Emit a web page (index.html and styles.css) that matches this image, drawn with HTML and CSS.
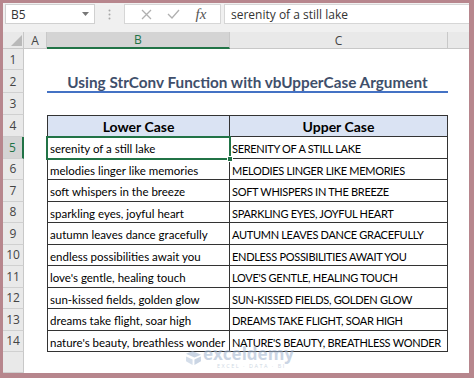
FILE: index.html
```html
<!DOCTYPE html>
<html>
<head>
<meta charset="utf-8">
<link rel="stylesheet" href="styles.css">
</head>
<body>
<div class="frame">
  <div class="fbar">
    <div class="namebox"><span class="nb-text">B5</span><svg class="caret" width="7" height="4" viewBox="0 0 7 4"><path d="M0 0h7L3.5 4z" fill="#777"/></svg></div>
    <div class="grip"><svg width="3" height="11" viewBox="0 0 3 11"><circle cx="1.5" cy="1.5" r="1" fill="#a8a8a8"/><circle cx="1.5" cy="5.5" r="1" fill="#a8a8a8"/><circle cx="1.5" cy="9.5" r="1" fill="#a8a8a8"/></svg></div>
    <div class="fbtns">
      <svg class="ico" width="11" height="11" viewBox="0 0 11 11"><path d="M1 1l9 9M10 1l-9 9" stroke="#b0b0b0" stroke-width="1.3" fill="none"/></svg>
      <svg class="ico" width="13" height="10" viewBox="0 0 13 10"><path d="M1 5l4 4 7-8" stroke="#b0b0b0" stroke-width="1.3" fill="none"/></svg>
      <span class="fx">fx</span>
    </div>
    <div class="finput">serenity of a still lake</div>
  </div>
  <div class="sheet">
    <div class="ch corner"><svg width="11" height="11" viewBox="0 0 11 11"><path d="M11 0v11H0z" fill="#b9b9b9"/></svg></div>
    <div class="ch">A</div>
    <div class="ch sel-col">B</div>
    <div class="ch">C</div>
    <div class="ch last"></div>

    <div class="rh">1</div><div class="cell"></div><div class="cell"></div><div class="cell"></div><div class="cell"></div>

    <div class="rh">2</div><div class="cell"></div><div class="title">Using StrConv Function with vbUpperCase Argument</div><div class="cell"></div>

    <div class="rh">3</div><div class="cell"></div><div class="cell"></div><div class="cell"></div><div class="cell"></div>

    <div class="rh">4</div><div class="cell"></div><div class="th tb">Lower Case</div><div class="th tc">Upper Case</div><div class="cell"></div>

    <div class="rh sel-row">5</div><div class="cell"></div><div class="td tb active">serenity of a still lake<span class="handle"></span></div><div class="td tc">SERENITY OF A STILL LAKE</div><div class="cell"></div>

    <div class="rh">6</div><div class="cell"></div><div class="td tb">melodies linger like memories</div><div class="td tc">MELODIES LINGER LIKE MEMORIES</div><div class="cell"></div>

    <div class="rh">7</div><div class="cell"></div><div class="td tb">soft whispers in the breeze</div><div class="td tc">SOFT WHISPERS IN THE BREEZE</div><div class="cell"></div>

    <div class="rh">8</div><div class="cell"></div><div class="td tb">sparkling eyes, joyful heart</div><div class="td tc">SPARKLING EYES, JOYFUL HEART</div><div class="cell"></div>

    <div class="rh">9</div><div class="cell"></div><div class="td tb">autumn leaves dance gracefully</div><div class="td tc">AUTUMN LEAVES DANCE GRACEFULLY</div><div class="cell"></div>

    <div class="rh">10</div><div class="cell"></div><div class="td tb">endless possibilities await you</div><div class="td tc">ENDLESS POSSIBILITIES AWAIT YOU</div><div class="cell"></div>

    <div class="rh">11</div><div class="cell"></div><div class="td tb">love's gentle, healing touch</div><div class="td tc">LOVE'S GENTLE, HEALING TOUCH</div><div class="cell"></div>

    <div class="rh">12</div><div class="cell"></div><div class="td tb">sun-kissed fields, golden glow</div><div class="td tc">SUN-KISSED FIELDS, GOLDEN GLOW</div><div class="cell"></div>

    <div class="rh">13</div><div class="cell"></div><div class="td tb">dreams take flight, soar high</div><div class="td tc">DREAMS TAKE FLIGHT, SOAR HIGH</div><div class="cell"></div>

    <div class="rh">14</div><div class="cell"></div><div class="td tb">nature's beauty, breathless wonder</div><div class="td tc">NATURE'S BEAUTY, BREATHLESS WONDER</div><div class="cell"></div>

    <div class="rh"></div><div class="cell"></div><div class="cell"></div><div class="cell"></div><div class="cell"></div>

    <div class="watermark">
      <svg width="15" height="14" viewBox="0 0 16 15"><path d="M0 3l7-3 9 4-7 3z" fill="#9fb4cf"/><path d="M0 6l7 3v6L0 11z" fill="#b3c4da"/><path d="M9 9l7-3v5l-7 4z" fill="#9fb4cf"/></svg>
      <div class="wm-text"><span class="wm-name">exceldemy</span><span class="wm-sub">EXCEL · DATA · BI</span></div>
    </div>
  </div>
</div>
</body>
</html>
```

FILE: styles.css
```css
* { box-sizing: border-box; margin: 0; padding: 0; }
html, body { width: 474px; height: 378px; overflow: hidden; }
body {
  background: #b7868d;
  padding: 3px 5px 5px 3px;
  font-family: Lato, "Liberation Sans", sans-serif;
}
.frame {
  width: 466px;
  height: 370px;
  background: #fff;
  display: flex;
  flex-direction: column;
  overflow: hidden;
}

/* formula bar */
.fbar {
  height: 29px;
  flex: none;
  background: #f0f0f0;
  display: flex;
  align-items: flex-start;
  padding: 1px 0 0 2px;
}
.namebox {
  width: 90px;
  height: 20px;
  background: #fff;
  border: 1px solid #d0d0d0;
  display: flex;
  align-items: center;
  justify-content: space-between;
  padding: 0 5px 0 5px;
  font-family: "Open Sans", sans-serif;
  font-size: 12px;
  color: #333;
}
.grip {
  width: 29px;
  height: 20px;
  display: flex;
  align-items: center;
  justify-content: center;
}
.fbtns {
  width: 97px;
  height: 20px;
  background: #fff;
  border: 1px solid #d6d6d6;
  display: flex;
  align-items: center;
  justify-content: space-around;
  padding: 0 6px 0 8px;
}
.fx {
  font-family: "Liberation Serif", serif;
  font-style: italic;
  font-size: 15px;
  color: #555;
  line-height: 1;
}
.finput {
  flex: 1;
  height: 20px;
  margin-left: 3px;
  background: #fff;
  border: 1px solid #d6d6d6;
  border-right: none;
  display: flex;
  align-items: center;
  padding-left: 6px;
  font-family: "Open Sans", sans-serif;
  font-size: 12px;
  color: #333;
}

/* sheet */
.sheet {
  flex: 1;
  position: relative;
  display: grid;
  grid-template-columns: 21px 23px 183px 218px 1fr;
  grid-template-rows: 17px 21px 23px 22px 22px repeat(10, 21.5px) 1fr;
  font-family: Lato, "Liberation Sans", sans-serif;
}
.ch {
  background: #e9e9e9;
  border-right: 1px solid #c8c8c8;
  border-bottom: 1px solid #c8c8c8;
  display: flex;
  align-items: center;
  justify-content: center;
  font-family: "Open Sans", sans-serif;
  font-size: 12px;
  color: #444;
}
.ch.corner { justify-content: flex-end; align-items: flex-end; padding: 0 1px 2px 0; }
.ch.last { border-right: none; }
.ch.sel-col {
  background: #d4d4d4;
  color: #217346;
  border-bottom: 2px solid #217346;
}
.rh {
  background: #e9e9e9;
  border-right: 1px solid #c8c8c8;
  border-bottom: 1px solid #d0d0d0;
  display: flex;
  align-items: center;
  justify-content: center;
  font-family: "Open Sans", sans-serif;
  font-size: 12px;
  color: #444;
}
.rh.sel-row {
  background: #d4d4d4;
  color: #217346;
  border-right: 2px solid #217346;
}
.cell { background: #fff; }

.title {
  grid-column: 3 / 5;
  border-bottom: 2px solid #4472c4;
  display: flex;
  align-items: center;
  justify-content: center;
  font-weight: 700;
  font-size: 15.3px;
  color: #3f4f6b;
  padding-top: 3px;
}

.th, .td {
  border-right: 1px solid #333;
  border-bottom: 1px solid #333;
  display: flex;
  align-items: center;
  white-space: nowrap;
  overflow: hidden;
  color: #000;
}
.tb { border-left: 1px solid #333; }
.th {
  border-top: 1px solid #333;
  background: #dae3f3;
  justify-content: center;
  font-weight: 700;
  font-size: 14px;
  padding-top: 1px;
}
.td {
  font-family: Lato, "Liberation Sans", sans-serif;
  font-size: 11.5px;
  padding: 3px 0 0 2px;
}
.td.tc {
  font-size: 11px;
  letter-spacing: -0.3px;
  padding-left: 2px;
}
.active {
  position: relative;
  overflow: visible;
  outline: 2px solid #217346;
  outline-offset: -1px;
  border-color: #217346;
}
.handle {
  position: absolute;
  right: -4px;
  bottom: -4px;
  width: 6px;
  height: 6px;
  background: #217346;
  border: 1px solid #fff;
  z-index: 2;
}

.watermark {
  position: absolute;
  left: 183px;
  top: 313px;
  display: flex;
  align-items: center;
  gap: 2px;
  opacity: 0.55;
  pointer-events: none;
}
.wm-text { display: flex; flex-direction: column; line-height: 1; }
.wm-name {
  font-family: "Open Sans", sans-serif;
  font-weight: 700;
  font-size: 17px;
  line-height: 18px;
  color: #9fb4cf;
}
.wm-sub {
  font-family: "Open Sans", sans-serif;
  font-size: 5.5px;
  line-height: 7px;
  letter-spacing: 1.5px;
  color: #a9b9cd;
  padding-left: 14px;
}
```
